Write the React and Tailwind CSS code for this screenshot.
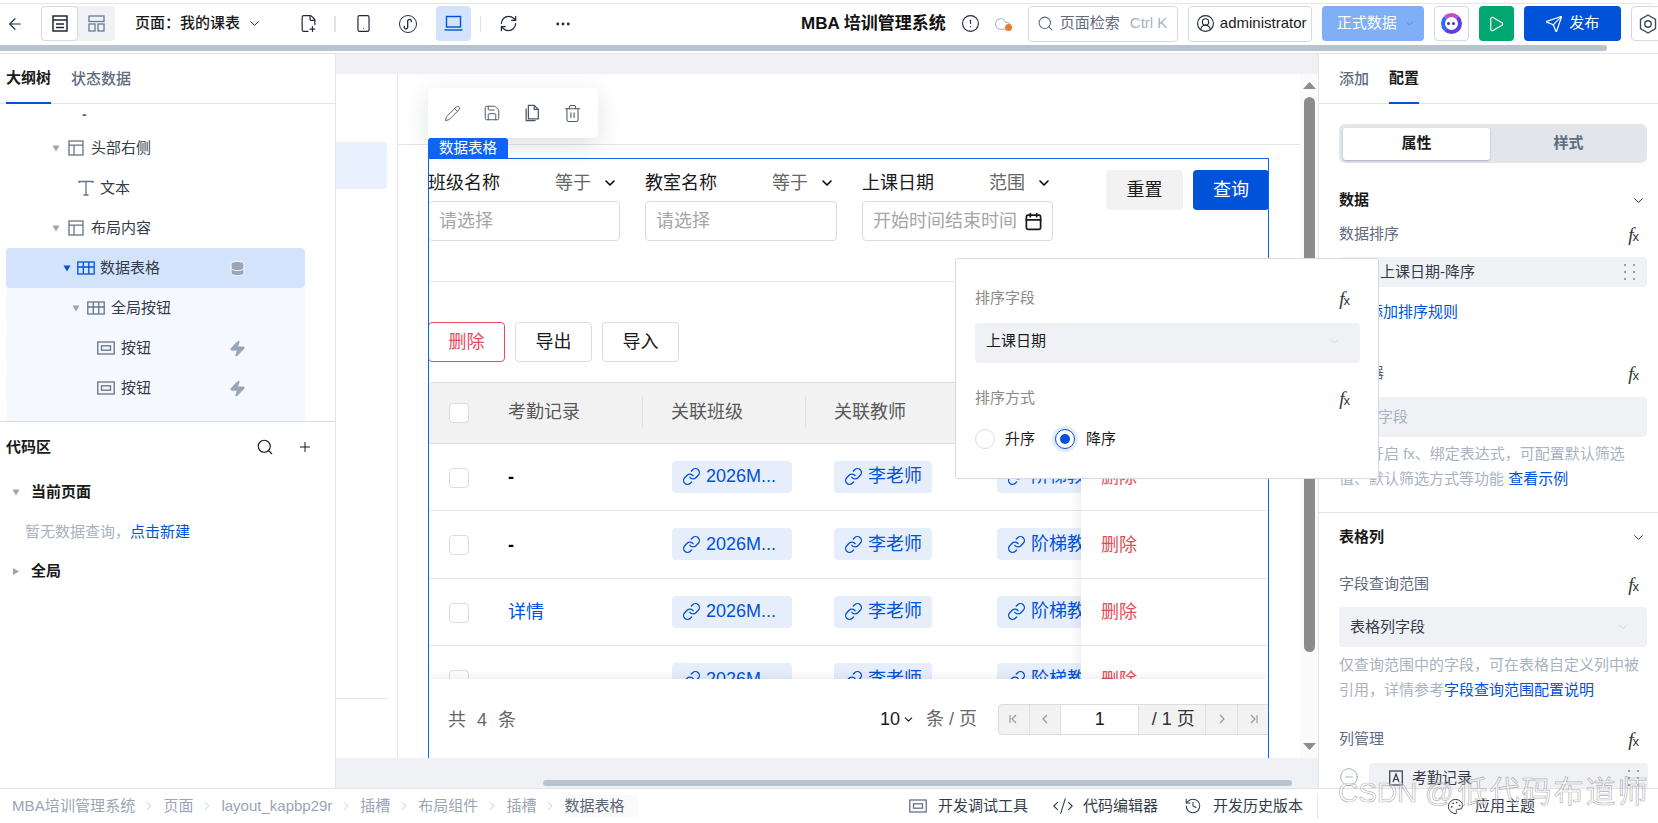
import React from "react";
import { ArrowLeft, ChevronDown, ChevronRight, FilePlus2, Smartphone, Ellipsis, Search, Plus, Pencil, Save, Trash2, Link, Send, Play, CircleUserRound, Database, Zap, Calendar, Cloud, RefreshCw, History, Palette, CodeXml, CircleMinus, CircleAlert } from "lucide-react";

const FONT = "font-['Liberation_Sans','Noto_Sans_CJK_SC',sans-serif]";

function Fx({ className = "" }) {
  return (
    <span className={"font-['Liberation_Serif',serif] italic text-[#333] text-[19px] leading-none " + className}>
      f<span className="not-italic font-['Liberation_Sans',sans-serif] text-[13px] -ml-[1px]">x</span>
    </span>
  );
}

function Tri({ blue, right }) {
  return (
    <svg width="8" height="7" viewBox="0 0 8 7" className={"shrink-0 " + (right ? "-rotate-90" : "")}>
      <path d="M0.5 0.5h7L4 6.5z" fill={blue ? "#0052d9" : "#9aa5b5"} />
    </svg>
  );
}

function LayoutIco() {
  return (
    <svg width="16" height="16" viewBox="0 0 16 16" fill="none" stroke="#64748b" strokeWidth="1.3" className="shrink-0">
      <rect x="1" y="1" width="14" height="14" />
      <path d="M1 5.2h14M6 5.2V15" />
    </svg>
  );
}

function TableIco({ color = "#64748b" }) {
  return (
    <svg width="18" height="14" viewBox="0 0 18 14" fill="none" stroke={color} strokeWidth="1.3" className="shrink-0">
      <rect x="0.8" y="1" width="16.4" height="12" />
      <path d="M0.8 6h16.4M6.3 1v12M11.8 1v12" />
    </svg>
  );
}

function ButtonIco() {
  return (
    <svg width="18" height="14" viewBox="0 0 18 14" fill="none" stroke="#64748b" strokeWidth="1.3" className="shrink-0">
      <rect x="0.8" y="1" width="16.4" height="12" />
      <rect x="4.5" y="4.8" width="9" height="4.4" />
    </svg>
  );
}

function Dots() {
  return (
    <svg width="14" height="18" viewBox="0 0 14 18" fill="#333" className="shrink-0">
      <circle cx="2" cy="2" r=".8" /><circle cx="2" cy="9" r=".8" /><circle cx="2" cy="16" r=".8" />
      <circle cx="11" cy="2" r=".8" /><circle cx="11" cy="9" r=".8" /><circle cx="11" cy="16" r=".8" />
    </svg>
  );
}

function TreeRow({ className = "", children }) {
  return <div className={"h-[40px] flex items-center text-[15px] text-[#333b48] shrink-0 " + className}>{children}</div>;
}

function Filter({ label, op }) {
  return (
    <div className="w-[192px] pt-[14px] shrink-0">
      <div className="h-[20px] flex items-center text-[18px] leading-[20px] whitespace-nowrap">
        <span className="w-[127px] text-[#1a1a1a]">{label}</span>
        <span className="w-[36px] text-[#666]">{op}</span>
        <ChevronDown size={16} strokeWidth={2.4} className="ml-[11px] text-black" />
      </div>
    </div>
  );
}

function Tag({ w, children }) {
  return (
    <div className={"h-[32px] rounded-[4px] bg-[#e7eefb] text-[#0052d9] text-[18px] flex items-center pl-[10px] gap-[5px] whitespace-nowrap overflow-hidden shrink-0 " + w}>
      <Link size={19} strokeWidth={1.7} className="shrink-0" />
      <span>{children}</span>
    </div>
  );
}

function Check() {
  return <div className="w-[20px] h-[20px] bg-white border border-[#dcdcdc] rounded-[4px] shrink-0" />;
}

function Row({ text, blue }) {
  return (
    <div className="h-[67.5px] shrink-0 border-b border-[#e7e7e7] grid grid-cols-[214px_163px_163px_112px] items-center overflow-hidden">
      <div className="flex items-center pl-[20px] pt-[2px]">
        <Check />
        <span className={"ml-[39px] text-[18px] " + (blue ? "text-[#0052d9]" : "text-black font-bold")}>{text}</span>
      </div>
      <div className="pl-[29px]"><Tag w="w-[120px]">2026M...</Tag></div>
      <div className="pl-[28px]"><Tag w="w-[98px]">李老师</Tag></div>
      <div className="pl-[28px]"><Tag w="w-[120px]">阶梯教室</Tag></div>
    </div>
  );
}

function DelCell() {
  return (
    <div className="h-[67.5px] shrink-0 border-b border-[#e7e7e7] flex items-center pl-[20px] pt-[2px] text-[18px] text-[#e34d59]">删除</div>
  );
}

function Crumb({ children, last }) {
  return (
    <>
      <span className={"whitespace-nowrap " + (last ? "text-[#5b6675] bg-[#fafafa] pr-[14px]" : "")}>{children}</span>
      {!last && <ChevronRight size={14} strokeWidth={1.3} className="mx-[7px] text-[#b4bcc8] shrink-0" />}
    </>
  );
}

function SideLabel({ children, className = "" }) {
  return (
    <div className={"h-[20px] flex items-center justify-between text-[15px] text-[#5f6b7f] pr-[9px] shrink-0 " + className}>
      <span>{children}</span>
      <Fx />
    </div>
  );
}

function Edge({ dir, bar }) {
  return (
    <svg width="14" height="14" viewBox="0 0 14 14" fill="none" stroke="#999" strokeWidth="1.2">
      {dir === "l" && <path d="M9 3L5 7l4 4" />}
      {dir === "r" && <path d="M5 3l4 4-4 4" />}
      {bar && dir === "l" && <path d="M3 3v8" />}
      {bar && dir === "r" && <path d="M11 3v8" />}
    </svg>
  );
}

export default function App() {
  return (
    <div className={"relative w-[1658px] h-[823px] overflow-hidden bg-white flex flex-col " + FONT}>
      {/* top bar */}
      <div className="h-[45px] shrink-0 pt-[3px] flex flex-col">
        <div className="h-px bg-[#e4e6ea] w-[1653px] shrink-0" />
        <div className="flex-1 flex items-center pl-[6px] pb-[2px] text-[#1f2937]">
          <ArrowLeft size={18} strokeWidth={1.5} className="shrink-0" />
          <div className="ml-[17px] w-[74px] h-[35px] bg-[#f0f1f5] rounded-[4px] flex shrink-0">
            <div className="w-[37px] h-[35px] bg-white border border-[#d5dae2] rounded-[4px] flex items-center justify-center">
              <svg width="16" height="17" viewBox="0 0 16 17" fill="none" stroke="#1f2937" strokeWidth="1.5">
                <rect x="1" y="1" width="14" height="15" />
                <path d="M1 5h14M4 9h8M4 12.5h8" />
              </svg>
            </div>
            <div className="w-[37px] flex items-center justify-center">
              <svg width="17" height="17" viewBox="0 0 17 17" fill="none" stroke="#6b7a90" strokeWidth="1.3">
                <rect x="1" y="1" width="15" height="5.5" />
                <rect x="1" y="9" width="6" height="7" />
                <rect x="10" y="9" width="6" height="7" />
              </svg>
            </div>
          </div>
          <span className="ml-[20px] text-[15px] font-medium text-[#1a1a1a] whitespace-nowrap w-[106px]">页面：我的课表</span>
          <ChevronDown size={15} strokeWidth={1.6} className="ml-[7px] shrink-0" />
          <FilePlus2 size={19} strokeWidth={1.5} className="ml-[37px] shrink-0" />
          <div className="ml-[16px] w-[1.5px] h-[16px] bg-[#dfe2e7] shrink-0" />
          <Smartphone size={19} strokeWidth={1.5} className="ml-[18px] shrink-0" />
          <div className="ml-[26px] w-[18px] h-[18px] rounded-full border-[1.5px] border-[#1f2937] flex items-center justify-center shrink-0">
            <svg width="12" height="12" viewBox="0 0 12 12" fill="none" stroke="#1f2937" strokeWidth="1.3">
              <path d="M2.5 8a1.8 1.8 0 1 0 3.2 1V3.2A1.8 1.8 0 1 1 9 4.2" />
            </svg>
          </div>
          <div className="ml-[19px] w-[35px] h-[35px] rounded-[4px] bg-[#d4e3fc] flex items-center justify-center shrink-0">
            <svg width="19" height="17" viewBox="0 0 19 17" fill="none" stroke="#0052d9" strokeWidth="1.4">
              <rect x="2.5" y="1.5" width="14" height="10.5" />
              <path d="M0.5 15h18" />
            </svg>
          </div>
          <div className="ml-[9px] w-[1.5px] h-[16px] bg-[#dfe2e7] shrink-0" />
          <RefreshCw size={19} strokeWidth={1.5} className="ml-[18px] shrink-0" />
          <Ellipsis size={18} strokeWidth={1.8} className="ml-[36px] shrink-0" />

          <span className="ml-[229px] text-[17px] font-bold text-[#111] whitespace-nowrap w-[146px]">MBA 培训管理系统</span>
          <CircleAlert size={19} strokeWidth={1.4} className="ml-[15px] shrink-0" />
          <div className="ml-[14px] relative shrink-0">
            <Cloud size={18} strokeWidth={1.4} className="text-[#a8b2c1]" />
            <div className="absolute right-0 bottom-[2px] w-[7px] h-[7px] rounded-full bg-[#ed7b2f]" />
          </div>
          <div className="ml-[16px] w-[150px] h-[36px] border border-[#d5dae2] rounded-[4px] flex items-center pl-[8px] shrink-0">
            <Search size={17} strokeWidth={1.5} className="text-[#5f6b7f] shrink-0" />
            <span className="ml-[6px] text-[15px] text-[#5f6b7f] whitespace-nowrap">页面检索</span>
            <span className="ml-[10px] text-[15px] text-[#a8b2c1] whitespace-nowrap">Ctrl K</span>
          </div>
          <div className="ml-[10px] w-[124px] h-[36px] border border-[#d5dae2] rounded-[4px] flex items-center pl-[7px] shrink-0">
            <CircleUserRound size={19} strokeWidth={1.4} className="shrink-0" />
            <span className="ml-[5px] text-[15px] text-[#1a1a1a] whitespace-nowrap">administrator</span>
          </div>
          <div className="ml-[10px] w-[102px] h-[35px] bg-[#80aef7] rounded-[4px] flex items-center pl-[15px] text-white shrink-0">
            <span className="text-[15px] whitespace-nowrap">正式数据</span>
            <ChevronDown size={13} strokeWidth={1.5} className="ml-[6px] text-[#5f80b8]" />
          </div>
          <div className="ml-[10px] w-[35px] h-[35px] border border-[#d5dae2] rounded-[4px] flex items-center justify-center shrink-0">
            <div className="w-[21px] h-[21px] rounded-full border-[4px] border-[#5b3fe0] border-l-[#2f6bf0] border-t-[#c64ad0] bg-white flex items-center justify-center gap-[2px]">
              <span className="w-[3px] h-[3px] rounded-full bg-[#3b33c9]" />
              <span className="w-[3px] h-[3px] rounded-full bg-[#3b33c9]" />
            </div>
          </div>
          <div className="ml-[10px] w-[35px] h-[35px] bg-[#00a870] rounded-[4px] flex items-center justify-center shrink-0">
            <Play size={18} strokeWidth={1.6} className="text-white" />
          </div>
          <div className="ml-[10px] w-[97px] h-[35px] bg-[#0052d9] rounded-[4px] flex items-center justify-center gap-[6px] text-white shrink-0">
            <Send size={18} strokeWidth={1.6} />
            <span className="text-[15px]">发布</span>
          </div>
          <div className="ml-[10px] w-[35px] h-[35px] border border-[#d5dae2] rounded-[4px] flex items-center justify-center shrink-0">
            <svg width="18" height="20" viewBox="0 0 18 20" fill="none" stroke="#3d4a5c" strokeWidth="1.4">
              <path d="M9 1l7.5 4.3v9.4L9 19l-7.5-4.3V5.3z" />
              <circle cx="9" cy="10" r="3.2" />
            </svg>
          </div>
        </div>
      </div>
      {/* page scrollbar */}
      <div className="h-[8px] shrink-0 bg-white">
        <div className="w-[1607px] h-[6px] rounded-r-full bg-[#b9c2cf]" />
      </div>

      <div className="flex-1 flex min-h-0 border-t border-[#e1e4e9]">
        {/* left */}
        <div className="w-[336px] shrink-0 border-r border-[#e1e4e9] flex flex-col">
          <div className="h-[50px] shrink-0 border-b border-[#e1e4e9] flex pl-[6px] gap-[20px] text-[15px]">
            <div className="h-[50px] border-b-2 border-[#0052d9] flex items-center font-bold text-[#1a1a1a] whitespace-nowrap">大纲树</div>
            <div className="h-[50px] flex items-center font-medium text-[#5f6b7f] whitespace-nowrap">状态数据</div>
          </div>
          <div className="h-[317px] shrink-0 overflow-hidden flex flex-col">
            <div className="h-[24px] shrink-0 pl-[82px] flex items-start pt-[3px] text-[#5f6b7f] font-bold text-[14px] leading-[14px]">-</div>
            <TreeRow className="pl-[52px]"><Tri /><span className="ml-[8px]"><LayoutIco /></span><span className="ml-[7px]">头部右侧</span></TreeRow>
            <TreeRow className="pl-[78px]">
              <svg width="16" height="16" viewBox="0 0 16 16" fill="none" stroke="#64748b" strokeWidth="1.3"><path d="M1 3V1.5h14V3M8 1.5V15M5.5 15h5" /></svg>
              <span className="ml-[6px]">文本</span>
            </TreeRow>
            <TreeRow className="pl-[52px]"><Tri /><span className="ml-[8px]"><LayoutIco /></span><span className="ml-[7px]">布局内容</span></TreeRow>
            <TreeRow className="ml-[6px] w-[299px] rounded-[4px] bg-[#d4e3fc] pl-[57px] text-[#0052d9]">
              <Tri blue /><span className="ml-[6px]"><TableIco color="#0052d9" /></span><span className="ml-[5px] w-[60px]">数据表格</span>
              <Database size={17} fill="#9aa5b5" strokeWidth={1.2} className="ml-[69px] text-white" />
            </TreeRow>
            <TreeRow className="ml-[6px] w-[299px] rounded-[4px] bg-[#f5f8ff] pl-[66px]">
              <Tri /><span className="ml-[7px]"><TableIco /></span><span className="ml-[6px]">全局按钮</span>
            </TreeRow>
            <TreeRow className="ml-[6px] w-[299px] rounded-[4px] bg-[#f5f8ff] pl-[91px]">
              <ButtonIco /><span className="ml-[6px] w-[107px]">按钮</span>
              <Zap size={17} fill="#9aa5b5" stroke="#9aa5b5" className="ml-[1px]" />
            </TreeRow>
            <TreeRow className="ml-[6px] w-[299px] rounded-[4px] bg-[#f5f8ff] pl-[91px]">
              <ButtonIco /><span className="ml-[6px] w-[107px]">按钮</span>
              <Zap size={17} fill="#9aa5b5" stroke="#9aa5b5" className="ml-[1px]" />
            </TreeRow>
            <TreeRow className="ml-[6px] w-[299px] rounded-[4px] bg-[#f5f8ff]" />
          </div>
          <div className="flex-1 border-t border-[#d5dae2] text-[15px]">
            <div className="h-[50px] flex items-center pl-[6px] text-[#1a1a1a] font-semibold">
              <span className="w-[250px]">代码区</span>
              <Search size={18} strokeWidth={1.5} />
              <Plus size={16} strokeWidth={1.5} className="ml-[23px]" />
            </div>
            <div className="h-[40px] flex items-center pl-[12px] font-bold text-[#1a1a1a]">
              <Tri /><span className="ml-[11px]">当前页面</span>
            </div>
            <div className="h-[40px] flex items-center pl-[25px] text-[#a8b2c1] whitespace-nowrap">
              暂无数据查询，<span className="text-[#0052d9]">点击新建</span>
            </div>
            <div className="h-[38px] flex items-center pl-[12px] font-bold text-[#1a1a1a]">
              <Tri right /><span className="ml-[11px]">全局</span>
            </div>
          </div>
        </div>

        {/* canvas */}
        <div className="w-[982px] shrink-0 bg-[#f0f1f5] flex flex-col min-h-0">
          <div className="h-[20px] shrink-0" />
          <div className="h-[684px] shrink-0 bg-white flex overflow-hidden">
            <div className="w-[62px] shrink-0 border-r border-[#e7e7e7]">
              <div className="mt-[68px] w-[51px] h-[47px] bg-[#eaf1fe] rounded-r-[4px]" />
              <div className="mt-[509px] w-[52px] border-b border-[#e7e7e7]" />
            </div>
            <div className="w-[902px] shrink-0 flex flex-col">
              <div className="h-[71px] shrink-0 border-b border-[#e7e7e7]" />
              <div className="mt-[13px] ml-[30px] w-[841px] flex-1 min-h-0 border-x border-t border-[#0d64f5] overflow-hidden flex flex-col">
                {/* filters */}
                <div className="h-[123px] shrink-0 border-b border-[#e7e7e7] relative flex flex-col">
                  <div className="flex -ml-px">
                    <div className="flex gap-[25px] w-[678px] shrink-0">
                      <div className="flex flex-col w-[192px]">
                        <Filter label="班级名称" op="等于" />
                        <div className="mt-[8px] h-[40px] border border-[#dcdcdc] rounded-[4px] flex items-center pl-[10px] pt-[1px] text-[18px] text-[#a6a6a6]">请选择</div>
                      </div>
                      <div className="flex flex-col w-[192px]">
                        <Filter label="教室名称" op="等于" />
                        <div className="mt-[8px] h-[40px] border border-[#dcdcdc] rounded-[4px] flex items-center pl-[10px] pt-[1px] text-[18px] text-[#a6a6a6]">请选择</div>
                      </div>
                      <div className="flex flex-col w-[191px]">
                        <Filter label="上课日期" op="范围" />
                        <div className="mt-[8px] h-[40px] border border-[#dcdcdc] rounded-[4px] flex items-center pl-[10px] pt-[1px] text-[18px] text-[#a6a6a6] whitespace-nowrap">
                          开始时间结束时间
                          <Calendar size={19} strokeWidth={2.2} className="ml-[7px] text-[#1a1a1a] shrink-0" />
                        </div>
                      </div>
                    </div>
                    <div className="flex gap-[10px] mt-[11px] shrink-0">
                      <div className="w-[77px] h-[40px] rounded-[4px] bg-[#f2f2f2] flex items-center justify-center text-[18px] text-[#1a1a1a]">重置</div>
                      <div className="w-[76px] h-[40px] rounded-[4px] bg-[#0052d9] flex items-center justify-center text-[18px] text-white">查询</div>
                    </div>
                  </div>
                </div>
                {/* actions */}
                <div className="mt-[40px] -ml-px flex gap-[10px] shrink-0 text-[18px]">
                  <div className="w-[77px] h-[40px] border border-[#e34d59] rounded-[4px] flex items-center justify-center text-[#e34d59]">删除</div>
                  <div className="w-[77px] h-[40px] border border-[#dcdcdc] rounded-[4px] flex items-center justify-center text-[#1a1a1a]">导出</div>
                  <div className="w-[77px] h-[40px] border border-[#dcdcdc] rounded-[4px] flex items-center justify-center text-[#1a1a1a]">导入</div>
                </div>
                {/* table */}
                <div className="mt-[20px] h-[297px] shrink-0 flex overflow-hidden">
                  <div className="w-[652px] shrink-0 flex flex-col">
                    <div className="h-[61.5px] shrink-0 bg-[#f2f2f2] border-y border-[#dcdcdc] rounded-tl-[4px] grid grid-cols-[214px_163px_163px_112px] items-center text-[18px] text-[#595959]">
                      <div className="flex items-center pl-[20px]">
                        <Check /><span className="ml-[39px]">考勤记录</span>
                        <div className="ml-auto w-px h-[31px] bg-[#e0e0e0]" />
                      </div>
                      <div className="flex items-center pl-[28px]">
                        <span>关联班级</span>
                        <div className="ml-auto w-px h-[31px] bg-[#e0e0e0]" />
                      </div>
                      <div className="flex items-center pl-[28px]"><span>关联教师</span></div>
                    </div>
                    <Row text="-" />
                    <Row text="-" />
                    <Row text="详情" blue />
                    <Row text="-" />
                  </div>
                  <div className="flex-1 flex flex-col shadow-[-4px_0_8px_rgba(0,0,0,0.06)] z-[1] bg-white">
                    <div className="h-[61.5px] shrink-0 bg-[#f2f2f2] border-y border-[#dcdcdc]" />
                    <DelCell />
                    <DelCell />
                    <DelCell />
                    <DelCell />
                  </div>
                </div>
                {/* pagination */}
                <div className="flex-1 relative z-[2] bg-white shadow-[0_-4px_8px_rgba(0,0,0,0.05)] flex items-center pl-[19px] text-[18px]">
                  <span className="text-[#666] tracking-[3px] whitespace-nowrap mt-[3px]">共 4 条</span>
                  <div className="ml-auto -mr-px flex items-center mt-[1px]">
                    <span className="text-[#1a1a1a]">10</span>
                    <ChevronDown size={13} strokeWidth={2} className="ml-[2px] text-[#1a1a1a]" />
                    <span className="ml-[11px] text-[#666] whitespace-nowrap">条 / 页</span>
                    <div className="ml-[21px] w-[271px] h-[31px] bg-[#f2f2f2] border border-[#dcdcdc] rounded-l-[4px] flex items-center text-[#595959]">
                      <div className="w-[31px] flex items-center justify-center border-r border-[#e0e0e0] h-full"><Edge dir="l" bar /></div>
                      <div className="w-[30px] flex items-center justify-center h-full"><Edge dir="l" /></div>
                      <div className="w-[80px] h-full bg-white border-x border-[#e0e0e0] flex items-center justify-center text-[#1a1a1a]">1</div>
                      <div className="w-[67px] flex items-center justify-center pl-[2px] border-r border-[#e0e0e0] h-full text-[#333] whitespace-nowrap">/ 1 页</div>
                      <div className="w-[32px] flex items-center justify-center border-r border-[#e0e0e0] h-full"><Edge dir="r" /></div>
                      <div className="w-[30px] flex items-center justify-center h-full"><Edge dir="r" bar /></div>
                    </div>
                  </div>
                </div>
              </div>
            </div>
            {/* native scrollbar */}
            <div className="w-[18px] shrink-0 bg-[#fafafa] flex flex-col items-center pl-[1px]">
              <svg width="13" height="7" viewBox="0 0 13 7" className="mt-[8px] shrink-0"><path d="M6.5 0L13 7H0z" fill="#8c8c8c" /></svg>
              <div className="mt-[8px] w-[11px] h-[555px] rounded-full bg-[#8c8c8c] shrink-0" />
              <svg width="13" height="7" viewBox="0 0 13 7" className="mt-[91px] shrink-0"><path d="M0 0h13L6.5 7z" fill="#8c8c8c" /></svg>
            </div>
          </div>
          <div className="flex-1 pt-[22px] pl-[207px]">
            <div className="w-[749px] h-[6px] rounded-full bg-[#b9c2cf]" />
          </div>
        </div>

        {/* right */}
        <div className="flex-1 border-l border-[#e1e4e9] flex flex-col overflow-hidden">
          <div className="h-[50px] shrink-0 border-b border-[#e1e4e9] flex pl-[20px] gap-[20px] text-[15px]">
            <div className="h-[50px] flex items-center font-medium text-[#5f6b7f]">添加</div>
            <div className="h-[50px] border-b-2 border-[#0052d9] flex items-center font-bold text-[#1a1a1a]">配置</div>
          </div>
          <div className="pl-[20px] pr-[10px] flex flex-col">
            <div className="mt-[20px] h-[39px] w-[308px] rounded-[6px] bg-[#e2e5ea] flex items-center pl-[4px] text-[15px] font-bold shrink-0">
              <div className="w-[147px] h-[32px] bg-white rounded-[3px] shadow-[0_1px_2px_rgba(80,95,120,0.4)] flex items-center justify-center text-[#1a1a1a]">属性</div>
              <div className="w-[157px] text-center text-[#5f6b7f]">样式</div>
            </div>
            <div className="mt-[27px] h-[20px] flex items-center justify-between text-[15px] font-bold text-[#1a1a1a] shrink-0">
              数据<ChevronDown size={15} strokeWidth={1.5} className="mr-[2px]" />
            </div>
            <SideLabel className="mt-[14px]">数据排序</SideLabel>
            <div className="mt-[13px] h-[30px] w-[308px] rounded-[4px] bg-[#f0f1f5] flex items-center pl-[41px] text-[15px] text-[#333b48] shrink-0">
              <span className="w-[243px]">上课日期-降序</span>
              <Dots />
            </div>
            <div className="mt-[15px] h-[20px] flex items-center text-[15px] text-[#0052d9] whitespace-nowrap shrink-0">
              <Plus size={14} /><span className="ml-[15px]">添加排序规则</span>
            </div>
            <SideLabel className="mt-[41px]">筛选器</SideLabel>
            <div className="mt-[14px] h-[40px] w-[308px] rounded-[4px] bg-[#f0f1f5] flex items-center pl-[9px] text-[15px] text-[#a8b2c1] shrink-0">筛选字段</div>
            <div className="mt-[4px] text-[15px] leading-[25px] text-[#a8b2c1] whitespace-nowrap shrink-0">
              <div>支持开启 fx、绑定表达式，可配置默认筛选</div>
              <div>值、默认筛选方式等功能 <span className="text-[#0052d9]">查看示例</span></div>
            </div>
          </div>
          <div className="mt-[21px] border-t border-[#e1e4e9] pl-[20px] pr-[10px] flex flex-col">
            <div className="mt-[14px] h-[20px] flex items-center justify-between text-[15px] font-bold text-[#1a1a1a] shrink-0">
              表格列<ChevronDown size={15} strokeWidth={1.5} className="mr-[2px]" />
            </div>
            <SideLabel className="mt-[27px]">字段查询范围</SideLabel>
            <div className="mt-[13px] h-[40px] w-[308px] rounded-[4px] bg-[#f0f1f5] flex items-center justify-between pl-[11px] pr-[17px] text-[15px] text-[#333b48] shrink-0">
              表格列字段<ChevronDown size={14} strokeWidth={1.2} className="text-[#c3cad4]" />
            </div>
            <div className="mt-[5px] text-[15px] leading-[25px] text-[#a8b2c1] whitespace-nowrap shrink-0">
              <div>仅查询范围中的字段，可在表格自定义列中被</div>
              <div>引用，详情参考<span className="text-[#0052d9]">字段查询范围配置说明</span></div>
            </div>
            <SideLabel className="mt-[27px]">列管理</SideLabel>
            <div className="mt-[14px] flex items-start shrink-0">
              <CircleMinus size={20} strokeWidth={1.2} className="mt-[4px] text-[#a8b2c1] shrink-0" />
              <div className="ml-[10px] w-[279px] h-[30px] rounded-[4px] bg-[#f0f1f5] flex items-center pl-[20px] text-[15px] text-[#333b48]">
                <svg width="14" height="16" viewBox="0 0 14 16" fill="none" stroke="#333b48" strokeWidth="1.2" className="shrink-0">
                  <rect x="0.7" y="1" width="12.6" height="14" />
                  <path d="M4 12l3-8 3 8M5 9.5h4" />
                </svg>
                <span className="ml-[9px] w-[215px]">考勤记录</span>
                <Dots />
              </div>
            </div>
          </div>
        </div>
      </div>

      {/* status bar */}
      <div className="h-[35px] shrink-0 border-t border-[#e1e4e9] bg-white flex items-center pl-[12px] text-[15px] text-[#9aa4b5]">
        <div className="flex items-center w-[616px] shrink-0">
          <span className="tracking-[0.1px] whitespace-nowrap">MBA培训管理系统</span>
          <ChevronRight size={14} strokeWidth={1.3} className="mx-[7px] text-[#b4bcc8] shrink-0" />
          <Crumb>页面</Crumb>
          <Crumb>layout_kapbp29r</Crumb>
          <Crumb>插槽</Crumb>
          <Crumb>布局组件</Crumb>
          <Crumb>插槽</Crumb>
          <Crumb last>数据表格</Crumb>
        </div>
        <div className="ml-[281px] flex items-center text-[#333b48] whitespace-nowrap">
          <ButtonIco />
          <span className="ml-[11px]">开发调试工具</span>
          <CodeXml size={22} strokeWidth={1.2} className="ml-[24px]" />
          <span className="ml-[9px]">代码编辑器</span>
          <History size={18} strokeWidth={1.4} className="ml-[26px]" />
          <span className="ml-[11px]">开发历史版本</span>
          <div className="ml-[14px] w-px h-[25px] bg-[#e1e4e9]" />
          <Palette size={17} strokeWidth={1.4} className="ml-[129px]" />
          <span className="ml-[11px]">应用主题</span>
        </div>
      </div>

      {/* selection toolbar */}
      <div className="absolute left-[428px] top-[88px] w-[170px] h-[50px] bg-white rounded-[4px] shadow-[0_8px_24px_rgba(30,40,60,0.14)] flex items-center pl-[16px] gap-[22px] text-[#4b5768] z-20">
        <Pencil size={17} strokeWidth={1.3} />
        <Save size={18} strokeWidth={1.3} />
        <svg width="18" height="19" viewBox="0 0 20 21" fill="none" stroke="currentColor" strokeWidth="1.4" className="shrink-0">
          <path d="M6 1.5h6.5L17 6v10.5H6z" /><path d="M12.5 1.5V6H17M3.5 5v13.5H14" />
        </svg>
        <Trash2 size={19} strokeWidth={1.3} />
      </div>
      <div className="absolute left-[428px] top-[138px] w-[80px] h-[20px] bg-[#0d64f5] rounded-t-[3px] text-white text-[14.5px] leading-[20px] text-center z-20">数据表格</div>

      {/* sort popover */}
      <div className="absolute left-[955px] top-[258px] w-[424px] h-[221px] bg-white border border-[#d5dae2] rounded-[3px] z-30 pl-[19px] pr-[18px] pt-[29px] text-[15px]">
        <div className="h-[20px] flex items-center justify-between text-[#8a8a8a]">排序字段<Fx className="mr-[10px]" /></div>
        <div className="mt-[15px] h-[40px] bg-[#f0f1f5] rounded-[4px] flex items-center justify-between pl-[11px] pr-[19px] pb-[3px] text-[#1a1a1a]">
          上课日期<ChevronDown size={13} strokeWidth={1.2} className="text-[#c3cad4]" />
        </div>
        <div className="mt-[25px] h-[20px] flex items-center justify-between text-[#8a8a8a]">排序方式<Fx className="mr-[10px]" /></div>
        <div className="mt-[20px] flex items-center text-[#1a1a1a]">
          <div className="w-[20px] h-[20px] rounded-full border border-[#dcdcdc] bg-white" />
          <span className="ml-[10px]">升序</span>
          <div className="ml-[20px] w-[20px] h-[20px] rounded-full border border-[#0052d9] bg-white ring-[3px] ring-[#e3ecfb] flex items-center justify-center">
            <div className="w-[10px] h-[10px] rounded-full bg-[#0052d9]" />
          </div>
          <span className="ml-[11px]">降序</span>
        </div>
      </div>

      {/* watermark */}
      <div className="absolute left-[1338px] top-[773px] z-40 text-[28px] leading-[38px] whitespace-nowrap text-[rgba(255,255,255,0.35)] [-webkit-text-stroke:0.7px_rgba(130,130,130,0.6)] pointer-events-none">
        <span>CSDN @</span><span className="ml-[4px] text-[30px] tracking-[2px]">低代码布道师</span>
      </div>
    </div>
  );
}
